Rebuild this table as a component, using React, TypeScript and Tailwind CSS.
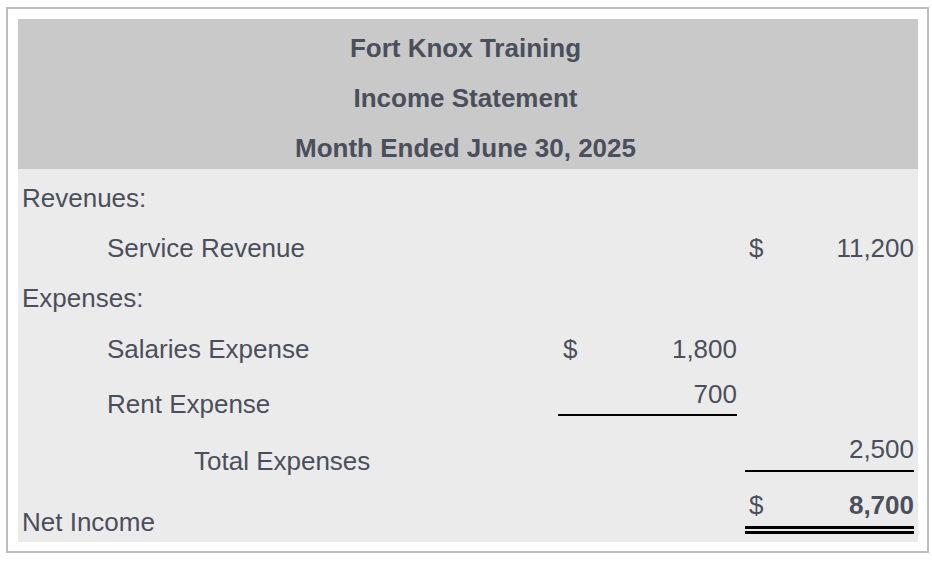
function Dollar({ pl }: { pl: string }) {
    return <span className={pl}>$</span>
}

export default function App() {
    return <div className="w-[932px] h-[564px] bg-white pl-[6px] pt-[7px] font-['Liberation_Sans',Arial,sans-serif] text-[26px] leading-[30px] text-[#4b4f5b]">
        <div className="w-[923px] h-[546px] border-2 border-[#bdbdbd] pt-[10px] pl-[10px]">
            <div className="w-[900px] bg-[#ebebeb]">
                {/* heading */}
                <div className="bg-[#c9c9c9] font-bold flex flex-col items-center pr-[5px]">
                    <div className="h-[50px] pt-[14px]">Fort Knox Training</div>
                    <div className="h-[50px] pt-[14px]">Income Statement</div>
                    <div className="h-[50px] pt-[14px]">Month Ended June 30, 2025</div>
                </div>

                <div className="grid grid-cols-[532px_179px_169px] gap-x-[8px] pr-[4px]">
                    {/* revenues */}
                    <div className="h-[50px] pt-[14px] pl-[4px]">Revenues:</div>
                    <div></div>
                    <div></div>

                    <div className="h-[50px] pt-[14px] pl-[89px]">Service Revenue</div>
                    <div></div>
                    <div className="pt-[14px] flex justify-between"><Dollar pl="pl-[4px]" /><span>11,200</span></div>

                    {/* expenses */}
                    <div className="h-[50px] pt-[14px] pl-[4px]">Expenses:</div>
                    <div></div>
                    <div></div>

                    <div className="h-[50px] pt-[15px] pl-[89px]">Salaries Expense</div>
                    <div className="pt-[15px] flex justify-between"><Dollar pl="pl-[5px]" /><span>1,800</span></div>
                    <div></div>

                    <div className="h-[56px] pt-[20px] pl-[89px]">Rent Expense</div>
                    <div className="pt-[10px]">
                        <div className="text-right pb-[5px] border-b-2 border-black">700</div>
                    </div>
                    <div></div>

                    <div className="h-[56px] pt-[21px] pl-[176px]">Total Expenses</div>
                    <div></div>
                    <div className="pt-[9px]">
                        <div className="text-right pb-[6px] border-b-2 border-black">2,500</div>
                    </div>

                    {/* net */}
                    <div className="h-[61px] pt-[26px] pl-[4px]">Net Income</div>
                    <div></div>
                    <div className="pt-[9px]">
                        <div className="flex justify-between pb-[6px]"><Dollar pl="pl-[4px]" /><span className="font-bold">8,700</span></div>
                        <div className="h-[3px] bg-black"></div>
                        <div className="h-[2px]"></div>
                        <div className="h-[3px] bg-black"></div>
                    </div>
                </div>
            </div>
        </div>
    </div>
}
